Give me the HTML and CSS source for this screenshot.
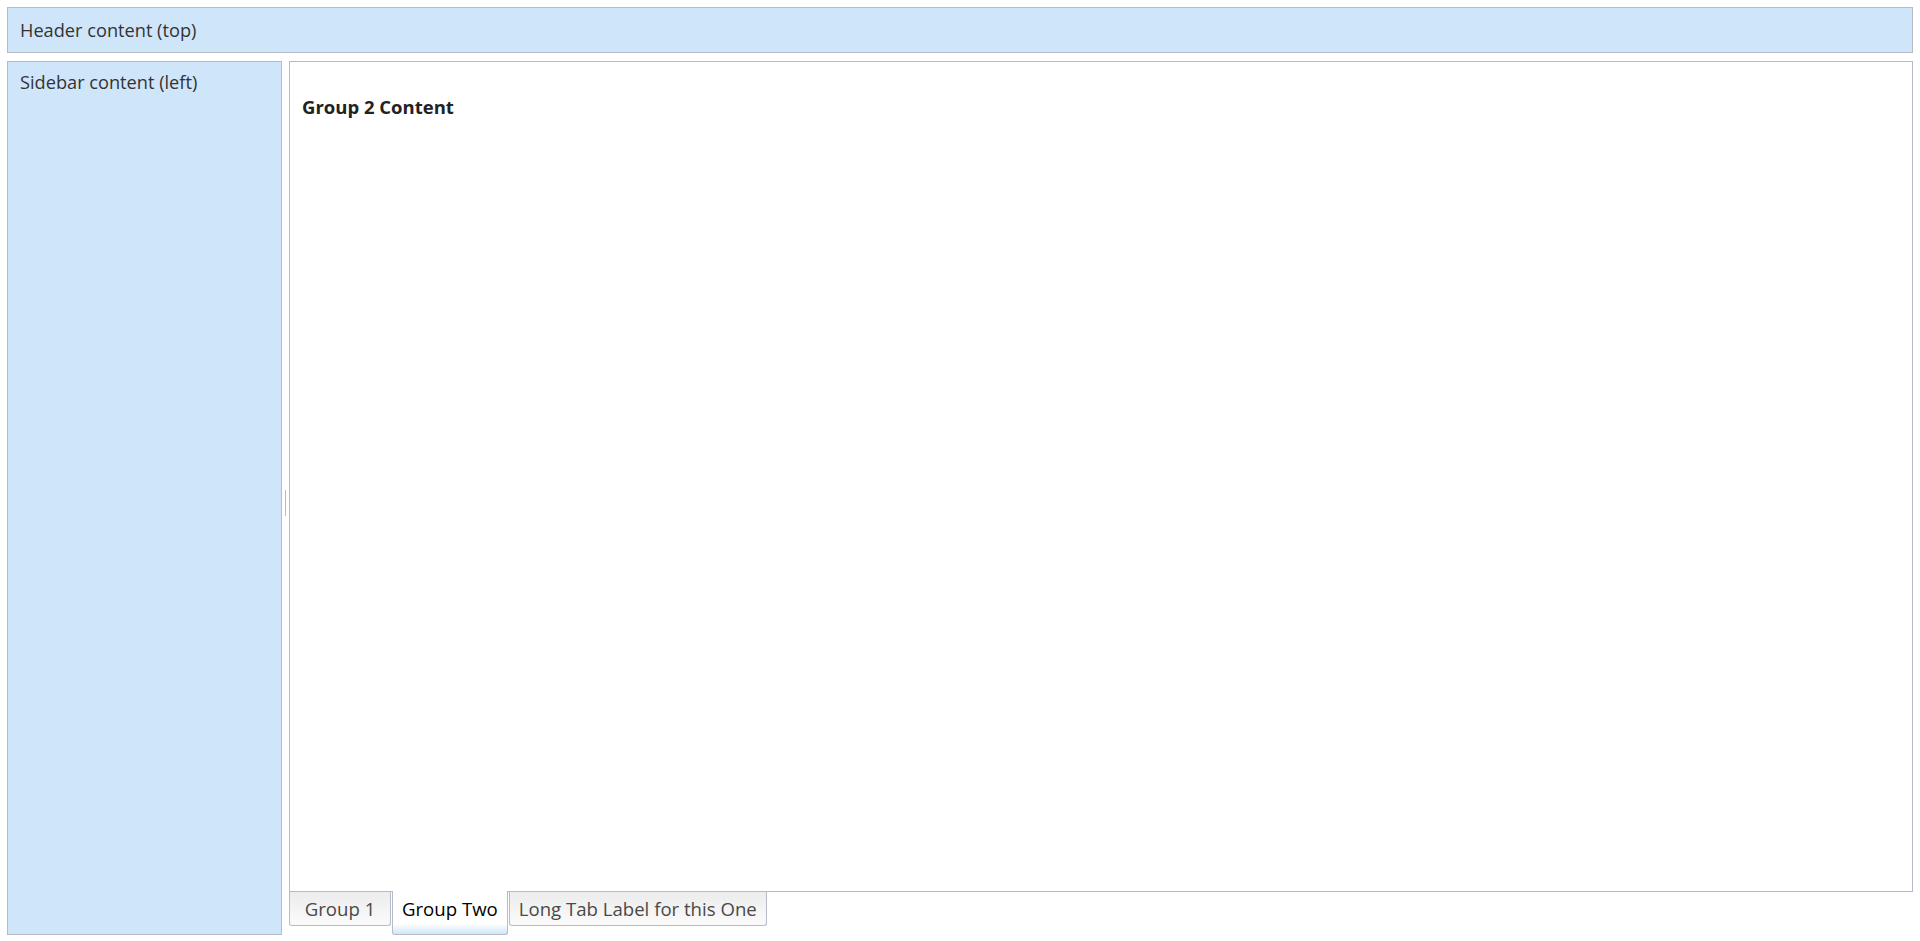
FILE: index.html
```html
<!DOCTYPE html>
<html lang="en">
<head>
<meta charset="utf-8">
<title>BorderContainer with TabContainer</title>
<link rel="stylesheet" href="styles.css">
</head>
<body>
<div class="app">
  <div class="header">Header content (top)</div>
  <div class="main">
    <div class="sidebar">Sidebar content (left)</div>
    <div class="splitter"><div class="thumb"></div></div>
    <div class="center">
      <div class="pane">
        <p class="pane-title">Group 2 Content</p>
      </div>
      <div class="tabs">
        <div class="tab">Group 1</div>
        <div class="tab tab-selected">Group Two</div>
        <div class="tab">Long Tab Label for this One</div>
      </div>
    </div>
  </div>
</div>
</body>
</html>
```
FILE: styles.css
```css
html, body {
  margin: 0;
  padding: 0;
  background: #ffffff;
}
body {
  font-family: "Open Sans", "Noto Sans", sans-serif;
  font-size: 18.2px;
  color: #333333;
}
.app {
  box-sizing: border-box;
  height: 941px;
  padding: 7px 7px 6px 7px;
  display: flex;
  flex-direction: column;
  gap: 8px;
}
.header {
  box-sizing: border-box;
  height: 46px;
  flex: none;
  background: #cfe5fa;
  border: 1px solid #b5bcc7;
  padding: 0 12px;
  display: flex;
  align-items: center;
}
.main {
  flex: 1;
  display: flex;
  min-height: 0;
}
.sidebar {
  box-sizing: border-box;
  width: 275px;
  flex: none;
  background: #cfe5fa;
  border: 1px solid #b5bcc7;
  padding: 8px 12px;
}
.splitter {
  width: 7px;
  flex: none;
  display: flex;
  align-items: center;
  justify-content: center;
  padding-top: 10px;
}
.thumb {
  width: 1px;
  height: 26px;
  background: #b5bcc7;
}
.center {
  flex: 1;
  display: flex;
  flex-direction: column;
  min-width: 0;
}
.pane {
  box-sizing: border-box;
  flex: 1;
  background: #ffffff;
  border: 1px solid #b5bcc7;
  padding: 8px 12px;
}
.pane-title {
  margin: 24px 0 0 0;
  font-weight: bold;
  font-size: 18.5px;
  color: #222222;
}
.tabs {
  flex: none;
  height: 43px;
  display: flex;
  align-items: flex-start;
  gap: 1px;
  font-size: 18.6px;
}
.tab {
  box-sizing: border-box;
  height: 34px;
  min-width: 102px;
  padding: 0 9px;
  border: 1px solid #b5bcc7;
  border-top: none;
  border-radius: 0 0 3px 3px;
  background: linear-gradient(to bottom, #ececec, #fbfbfb);
  color: #494949;
  display: flex;
  align-items: center;
  justify-content: center;
  white-space: nowrap;
}
.tab-selected {
  margin-top: -1px;
  height: 44px;
  padding: 1px 9px 10px 9px;
  background: linear-gradient(to top, #cfe5fa 0, #ffffff 10px);
  color: #000000;
}
```
